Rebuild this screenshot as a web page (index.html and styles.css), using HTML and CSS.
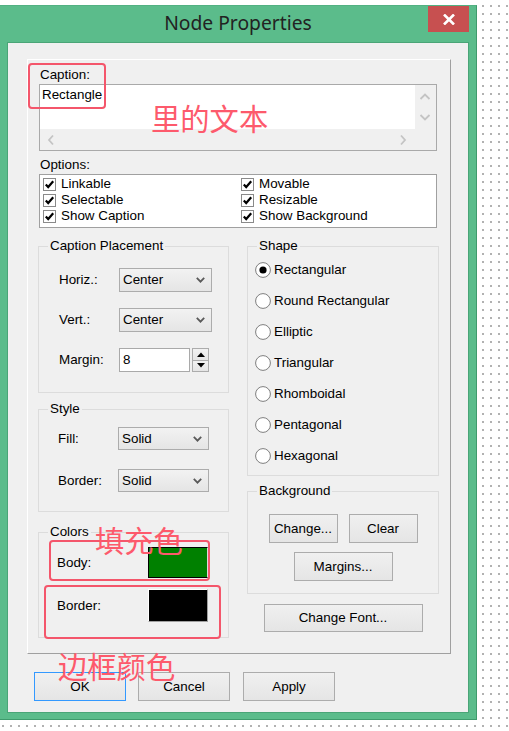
FILE: index.html
```html
<!DOCTYPE html>
<html>
<head>
<meta charset="utf-8">
<title>Node Properties</title>
<link rel="stylesheet" href="styles.css">
</head>
<body>
<div class="window">
  <div class="titlebar">
    <div class="title">Node Properties</div>
    <div class="close"><svg width="14" height="11" viewBox="0 0 14 11"><path d="M2 0.5 L12 10.5 M12 0.5 L2 10.5" stroke="#fff" stroke-width="2.6"/></svg></div>
  </div>
  <div class="content">
    <div class="panel">
      <div class="lbl cap-lbl">Caption:</div>
      <div class="textarea">
        <div class="ta-text">Rectangle</div>
        <div class="vscroll">
          <svg width="21" height="44" viewBox="0 0 21 44"><path d="M5.5 14 L10 9.5 L14.5 14" fill="none" stroke="#c4c4c4" stroke-width="1.8"/><path d="M5.5 30 L10 34.5 L14.5 30" fill="none" stroke="#c4c4c4" stroke-width="1.8"/></svg>
        </div>
        <div class="hscroll">
          <svg width="8" height="12" viewBox="0 0 8 12"><path d="M6 1.5 L2 6 L6 10.5" fill="none" stroke="#c4c4c4" stroke-width="1.8"/></svg>
          <svg width="8" height="12" viewBox="0 0 8 12"><path d="M2 1.5 L6 6 L2 10.5" fill="none" stroke="#c4c4c4" stroke-width="1.8"/></svg>
        </div>
      </div>
      <div class="lbl opt-lbl">Options:</div>
      <div class="options">
        <div class="chk"><svg class="cb" width="13" height="13" viewBox="0 0 13 13"><rect x="0.5" y="0.5" width="12" height="12" fill="#fff" stroke="#8a8a8a"/><path d="M2.8 6.4 L5.2 9 L10.2 3.2" fill="none" stroke="#000" stroke-width="2.2"/></svg><span>Linkable</span></div>
        <div class="chk"><svg class="cb" width="13" height="13" viewBox="0 0 13 13"><rect x="0.5" y="0.5" width="12" height="12" fill="#fff" stroke="#8a8a8a"/><path d="M2.8 6.4 L5.2 9 L10.2 3.2" fill="none" stroke="#000" stroke-width="2.2"/></svg><span>Movable</span></div>
        <div class="chk"><svg class="cb" width="13" height="13" viewBox="0 0 13 13"><rect x="0.5" y="0.5" width="12" height="12" fill="#fff" stroke="#8a8a8a"/><path d="M2.8 6.4 L5.2 9 L10.2 3.2" fill="none" stroke="#000" stroke-width="2.2"/></svg><span>Selectable</span></div>
        <div class="chk"><svg class="cb" width="13" height="13" viewBox="0 0 13 13"><rect x="0.5" y="0.5" width="12" height="12" fill="#fff" stroke="#8a8a8a"/><path d="M2.8 6.4 L5.2 9 L10.2 3.2" fill="none" stroke="#000" stroke-width="2.2"/></svg><span>Resizable</span></div>
        <div class="chk"><svg class="cb" width="13" height="13" viewBox="0 0 13 13"><rect x="0.5" y="0.5" width="12" height="12" fill="#fff" stroke="#8a8a8a"/><path d="M2.8 6.4 L5.2 9 L10.2 3.2" fill="none" stroke="#000" stroke-width="2.2"/></svg><span>Show Caption</span></div>
        <div class="chk"><svg class="cb" width="13" height="13" viewBox="0 0 13 13"><rect x="0.5" y="0.5" width="12" height="12" fill="#fff" stroke="#8a8a8a"/><path d="M2.8 6.4 L5.2 9 L10.2 3.2" fill="none" stroke="#000" stroke-width="2.2"/></svg><span>Show Background</span></div>
      </div>
      <div class="cols">
        <div class="col col-left">
          <div class="grp gp-place">
            <div class="legend">Caption Placement</div>
            <div class="frow">
              <div class="flbl">Horiz.:</div>
              <div class="sel sel-w93"><span>Center</span><svg width="9" height="6" viewBox="0 0 9 6"><path d="M0.8 0.8 L4.5 4.6 L8.2 0.8" fill="none" stroke="#5a5a5a" stroke-width="1.8"/></svg></div>
            </div>
            <div class="frow">
              <div class="flbl">Vert.:</div>
              <div class="sel sel-w93"><span>Center</span><svg width="9" height="6" viewBox="0 0 9 6"><path d="M0.8 0.8 L4.5 4.6 L8.2 0.8" fill="none" stroke="#5a5a5a" stroke-width="1.8"/></svg></div>
            </div>
            <div class="frow">
              <div class="flbl">Margin:</div>
              <div class="num">8</div>
              <div class="spin">
                <div class="spin-btn"><svg width="8" height="5" viewBox="0 0 8 5"><path d="M0 5 L4 0.5 L8 5 Z" fill="#000"/></svg></div>
                <div class="spin-btn"><svg width="8" height="5" viewBox="0 0 8 5"><path d="M0 0 L4 4.5 L8 0 Z" fill="#000"/></svg></div>
              </div>
            </div>
          </div>
          <div class="grp gp-style">
            <div class="legend">Style</div>
            <div class="frow frow-s">
              <div class="flbl">Fill:</div>
              <div class="sel sel-w91"><span>Solid</span><svg width="9" height="6" viewBox="0 0 9 6"><path d="M0.8 0.8 L4.5 4.6 L8.2 0.8" fill="none" stroke="#5a5a5a" stroke-width="1.8"/></svg></div>
            </div>
            <div class="frow frow-s">
              <div class="flbl">Border:</div>
              <div class="sel sel-w91"><span>Solid</span><svg width="9" height="6" viewBox="0 0 9 6"><path d="M0.8 0.8 L4.5 4.6 L8.2 0.8" fill="none" stroke="#5a5a5a" stroke-width="1.8"/></svg></div>
            </div>
          </div>
          <div class="grp gp-colors">
            <div class="legend">Colors</div>
            <div class="crow crow-body">
              <div class="clbl">Body:</div>
              <div class="swatch sw-green"></div>
            </div>
            <div class="crow crow-border">
              <div class="clbl">Border:</div>
              <div class="swatch sw-black"></div>
            </div>
          </div>
        </div>
        <div class="col col-right">
          <div class="grp gp-shape">
            <div class="legend">Shape</div>
            <div class="radio"><svg width="16" height="16" viewBox="0 0 16 16"><circle cx="8" cy="8" r="7.4" fill="#fff" stroke="#7e7e7e"/><circle cx="8" cy="8" r="3.6" fill="#000"/></svg><span>Rectangular</span></div>
            <div class="radio"><svg width="16" height="16" viewBox="0 0 16 16"><circle cx="8" cy="8" r="7.4" fill="#fff" stroke="#7e7e7e"/></svg><span>Round Rectangular</span></div>
            <div class="radio"><svg width="16" height="16" viewBox="0 0 16 16"><circle cx="8" cy="8" r="7.4" fill="#fff" stroke="#7e7e7e"/></svg><span>Elliptic</span></div>
            <div class="radio"><svg width="16" height="16" viewBox="0 0 16 16"><circle cx="8" cy="8" r="7.4" fill="#fff" stroke="#7e7e7e"/></svg><span>Triangular</span></div>
            <div class="radio"><svg width="16" height="16" viewBox="0 0 16 16"><circle cx="8" cy="8" r="7.4" fill="#fff" stroke="#7e7e7e"/></svg><span>Rhomboidal</span></div>
            <div class="radio"><svg width="16" height="16" viewBox="0 0 16 16"><circle cx="8" cy="8" r="7.4" fill="#fff" stroke="#7e7e7e"/></svg><span>Pentagonal</span></div>
            <div class="radio"><svg width="16" height="16" viewBox="0 0 16 16"><circle cx="8" cy="8" r="7.4" fill="#fff" stroke="#7e7e7e"/></svg><span>Hexagonal</span></div>
          </div>
          <div class="grp gp-bg">
            <div class="legend">Background</div>
            <div class="brow">
              <div class="btn btn-69">Change...</div>
              <div class="btn btn-69">Clear</div>
            </div>
            <div class="brow brow-2">
              <div class="btn btn-99">Margins...</div>
            </div>
          </div>
          <div class="btn btn-font">Change Font...</div>
        </div>
      </div>
    </div>
    <div class="actions">
      <div class="btn btn-92 btn-default">OK</div>
      <div class="btn btn-92">Cancel</div>
      <div class="btn btn-92 btn-apply">Apply</div>
    </div>

    <div class="rbox rbox-caption"></div>
    <div class="note note-1">里的文本</div>
    <div class="rbox rbox-body"></div>
    <div class="note note-2">填充色</div>
    <div class="rbox rbox-border"></div>
    <div class="note note-3">边框颜色</div>
  </div>
</div>
</body>
</html>
```

FILE: styles.css
```css
html, body {
  margin: 0;
  padding: 0;
}
body {
  width: 509px;
  height: 731px;
  overflow: hidden;
  background-color: #ffffff;
  background-image: radial-gradient(circle at 4px 4px, #9c9c9c 0, #9c9c9c 0.6px, rgba(255,255,255,0) 1.1px);
  background-size: 8px 8px;
  background-position: -1px 2px;
  font-family: "Liberation Sans", Arial, sans-serif;
  font-size: 13.4px;
  color: #000;
}
.window {
  box-sizing: border-box;
  margin-top: 5px;
  width: 477px;
  height: 715px;
  background: #5bbc8b;
  border-top: 1px solid #52b182;
  border-right: 1px solid #3f9a6c;
  border-bottom: 1px solid #3f9a6c;
}
.titlebar {
  position: relative;
  height: 37px;
  display: flex;
  justify-content: center;
}
.title {
  font-family: "Noto Sans", "Open Sans", sans-serif;
  font-size: 19.3px;
  line-height: 33px;
  color: #222;
}
.close {
  position: absolute;
  top: 0;
  right: 7px;
  width: 41px;
  height: 26px;
  background: #c75050;
  display: flex;
  align-items: center;
  justify-content: center;
}
.content {
  position: relative;
  box-sizing: border-box;
  margin-left: 8px;
  width: 460px;
  height: 669px;
  background: #f0f0f0;
  padding: 16px 0 0 19px;
  box-shadow: 0 0 0 1px #4aa577;
}
.panel {
  box-sizing: border-box;
  width: 424px;
  height: 595px;
  border-top: 1px solid #ffffff;
  border-left: 1px solid #ffffff;
  border-right: 1px solid #a0a0a0;
  border-bottom: 1px solid #a0a0a0;
}
.lbl {
  line-height: 16px;
  margin-left: 12px;
}
.cap-lbl { margin-top: 7px; }
.opt-lbl { margin-top: 6px; }
.textarea {
  box-sizing: border-box;
  margin: 1px 0 0 11px;
  width: 398px;
  height: 67px;
  border: 1px solid #a9a9a9;
  display: grid;
  grid-template-columns: 1fr 21px;
  grid-template-rows: 44px 21px;
}
.ta-text {
  background: #fff;
  padding: 2px 0 0 2px;
  line-height: 16px;
}
.vscroll {
  background: #f0f0f0;
  display: flex;
}
.hscroll {
  grid-column: 1 / 3;
  background: #f0f0f0;
  display: flex;
  justify-content: space-between;
  align-items: center;
  padding: 0 29px 0 7px;
}
.options {
  box-sizing: border-box;
  margin: 1px 0 0 11px;
  width: 398px;
  height: 54px;
  border: 1px solid #a0a0a0;
  background: #fff;
  padding: 1px 0 0 3px;
  display: grid;
  grid-template-columns: 198px 198px;
  grid-auto-rows: 16px;
}
.chk {
  display: flex;
  align-items: center;
  line-height: 16px;
  white-space: nowrap;
}
.cb {
  flex: none;
  margin-right: 5px;
}
.cols {
  display: flex;
  margin-top: 18px;
}
.col { display: flex; flex-direction: column; }
.col-left { margin-left: 10px; width: 191px; }
.col-right { margin-left: 18px; width: 192px; }
.grp {
  display: flex;
  flex-direction: column;
  border: 1px solid #dcdcdc;
}
.legend {
  align-self: flex-start;
  margin: -9px 0 0 9px;
  padding: 0 2px;
  line-height: 16px;
  background: #f0f0f0;
  white-space: nowrap;
}
.gp-place { padding: 0 0 20px 20px; }
.gp-place .legend { margin-left: -11px; margin-bottom: 14px; }
.gp-style { margin-top: 16px; padding: 0 0 19px 19px; }
.gp-style .legend { margin-left: -10px; margin-bottom: 10px; }
.gp-colors { margin-top: 20px; padding: 0 0 15px 18px; }
.gp-colors .legend { margin-left: -9px; margin-bottom: 7px; }
.frow {
  display: flex;
  align-items: center;
  height: 24px;
}
.frow + .frow { margin-top: 16px; }
.frow-s { height: 23px; }
.frow-s + .frow-s { margin-top: 19px; }
.flbl { width: 60px; line-height: 16px; }
.sel {
  box-sizing: border-box;
  height: 100%;
  border: 1px solid #acacac;
  background: linear-gradient(#f2f2f2, #e5e5e5);
  display: flex;
  align-items: center;
  justify-content: space-between;
  padding: 0 6px 0 3px;
  line-height: 16px;
}
.sel-w93 { width: 93px; }
.sel-w91 { width: 91px; }
.num {
  box-sizing: border-box;
  width: 71px;
  height: 24px;
  border: 1px solid #a9a9a9;
  background: #fff;
  padding: 3px 0 0 3px;
  line-height: 16px;
}
.spin {
  margin-left: 2px;
  width: 17px;
  height: 24px;
  display: flex;
  flex-direction: column;
}
.spin-btn {
  box-sizing: border-box;
  flex: 1;
  border: 1px solid #acacac;
  background: linear-gradient(#f2f2f2, #e5e5e5);
  display: flex;
  align-items: center;
  justify-content: center;
}
.spin-btn + .spin-btn { border-top: none; }
.crow { display: flex; align-items: center; }
.crow-body { height: 31px; }
.crow-border { height: 33px; margin-top: 11px; }
.clbl { width: 91px; line-height: 16px; }
.swatch {
  box-sizing: border-box;
  width: 60px;
  height: 100%;
}
.sw-green {
  background: #008000;
  border: 1px solid #000;
  border-right-color: #dcdcdc;
}
.sw-black {
  background: #000;
  border-top: 1px solid #fff;
  border-left: 1px solid #fff;
  border-right: 1px solid #a0a0a0;
  border-bottom: 1px solid #a0a0a0;
}
.gp-shape { padding: 0 0 11px 7px; }
.gp-shape .legend { margin-left: 2px; margin-bottom: 8px; }
.radio {
  display: flex;
  align-items: center;
  height: 16px;
  line-height: 16px;
  white-space: nowrap;
}
.radio + .radio { margin-top: 15px; }
.radio svg { flex: none; margin-right: 3px; }
.gp-bg { margin-top: 15px; padding: 0 0 12px 0; }
.gp-bg .legend { margin-bottom: 15px; }
.brow {
  display: flex;
  justify-content: center;
  gap: 11px;
}
.brow-2 { margin-top: 9px; }
.btn {
  box-sizing: border-box;
  height: 29px;
  border: 1px solid #acacac;
  background: linear-gradient(#f0f0f0, #e5e5e5);
  display: flex;
  align-items: center;
  justify-content: center;
  line-height: 16px;
  white-space: nowrap;
}
.btn-69 { width: 69px; }
.btn-99 { width: 99px; }
.btn-92 { width: 92px; }
.btn-font {
  width: 159px;
  height: 28px;
  margin: 10px auto 0;
}
.btn-default { border-color: #3399ff; }
.actions {
  display: flex;
  gap: 12px;
  margin: 18px 0 0 7px;
}
.btn-apply { margin-left: 1px; }
.rbox {
  position: absolute;
  box-sizing: border-box;
  border: 2px solid #f4566b;
  border-radius: 4px;
}
.rbox-caption { left: 20px; top: 20px; width: 78px; height: 46px; }
.rbox-body { left: 41px; top: 497px; width: 161px; height: 41px; }
.rbox-border { left: 36px; top: 542px; width: 177px; height: 54px; }
.note {
  position: absolute;
  font-family: "Noto Sans CJK SC", "Noto Sans", sans-serif;
  font-size: 29.3px;
  line-height: 29px;
  color: #fd5a6c;
  white-space: nowrap;
}
.note-1 { left: 143px; top: 60px; }
.note-2 { left: 87px; top: 482px; }
.note-3 { left: 50px; top: 608px; }
```
